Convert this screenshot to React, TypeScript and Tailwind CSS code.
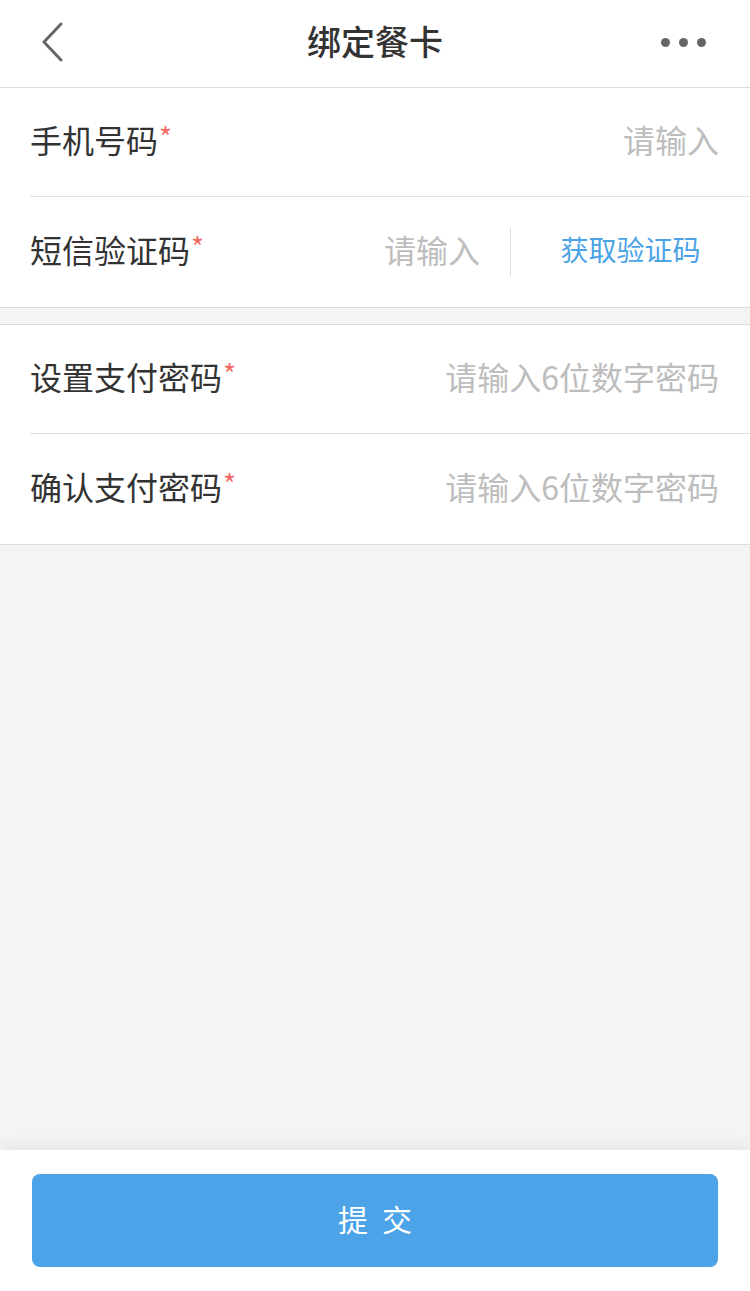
import React from "react";

const font = { fontFamily: '"Noto Sans CJK SC", "Noto Sans", sans-serif' };

function Star() {
  return <span className="text-[#f26a63] text-[28px] relative top-[-3px] ml-[1px]">*</span>;
}

export default function App() {
  return (
    <div className="min-h-[1291px] w-[750px] bg-[#f4f4f4] flex flex-col" style={font}>
      <header className="h-[88px] bg-white border-b border-[#dcdcdc] flex items-center justify-between px-[40px] relative">
        <svg width="26" height="40" viewBox="0 0 26 40" className="mt-[-4px]">
          <polyline points="21,2 4,20 21,38" fill="none" stroke="#666" strokeWidth="3" strokeLinecap="round" strokeLinejoin="round" />
        </svg>
        <div className="absolute left-0 right-0 top-0 h-[87px] pb-[6px] flex items-center justify-center text-[34px] font-medium text-[#333] leading-none pointer-events-none">绑定餐卡</div>
        <div className="flex items-center gap-[9px] mr-[4px] mt-[-2px]">
          <span className="w-[9px] h-[9px] rounded-full bg-[#666]" />
          <span className="w-[9px] h-[9px] rounded-full bg-[#666]" />
          <span className="w-[9px] h-[9px] rounded-full bg-[#666]" />
        </div>
      </header>

      <section className="bg-white border-b border-[#dcdcdc]">
        <div className="ml-[30px] h-[109px] pb-[6px] flex items-center justify-between pr-[31px] border-b border-[#e1e1e1]">
          <div className="text-[32px] text-[#333] leading-none flex items-center">
            手机号码
            <Star />
          </div>
          <div className="text-[32px] text-[#bdbdbd] leading-none">请输入</div>
        </div>
        <div className="ml-[30px] h-[110px] flex items-center">
          <div className="text-[32px] text-[#333] leading-none flex items-center flex-1 pb-[6px]">
            短信验证码
            <Star />
          </div>
          <div className="text-[32px] text-[#bdbdbd] leading-none mr-[30px] pb-[6px]">请输入</div>
          <div className="w-[1px] h-[48px] bg-[#dcdcdc]" />
          <div className="w-[239px] text-center text-[28px] text-[#4ba3e6] leading-none pb-[6px]">获取验证码</div>
        </div>
      </section>

      <section className="bg-white border-y border-[#dcdcdc] mt-[16px]">
        <div className="ml-[30px] h-[109px] pb-[6px] flex items-center justify-between pr-[31px] border-b border-[#e1e1e1]">
          <div className="text-[32px] text-[#333] leading-none flex items-center">
            设置支付密码
            <Star />
          </div>
          <div className="text-[32px] text-[#bdbdbd] leading-none">请输入6位数字密码</div>
        </div>
        <div className="ml-[30px] h-[110px] pb-[6px] flex items-center justify-between pr-[31px]">
          <div className="text-[32px] text-[#333] leading-none flex items-center">
            确认支付密码
            <Star />
          </div>
          <div className="text-[32px] text-[#bdbdbd] leading-none">请输入6位数字密码</div>
        </div>
      </section>

      <div className="flex-1" />

      <footer className="h-[141px] bg-white shadow-[0_-6px_14px_rgba(0,0,0,0.06)] pt-[24px] px-[32px]">
        <button className="w-full h-[93px] rounded-[8px] bg-[#4ca3e8] text-white text-[30px] tracking-[14px] pl-[14px] pb-[5px] leading-none">
          提交
        </button>
      </footer>
    </div>
  );
}
